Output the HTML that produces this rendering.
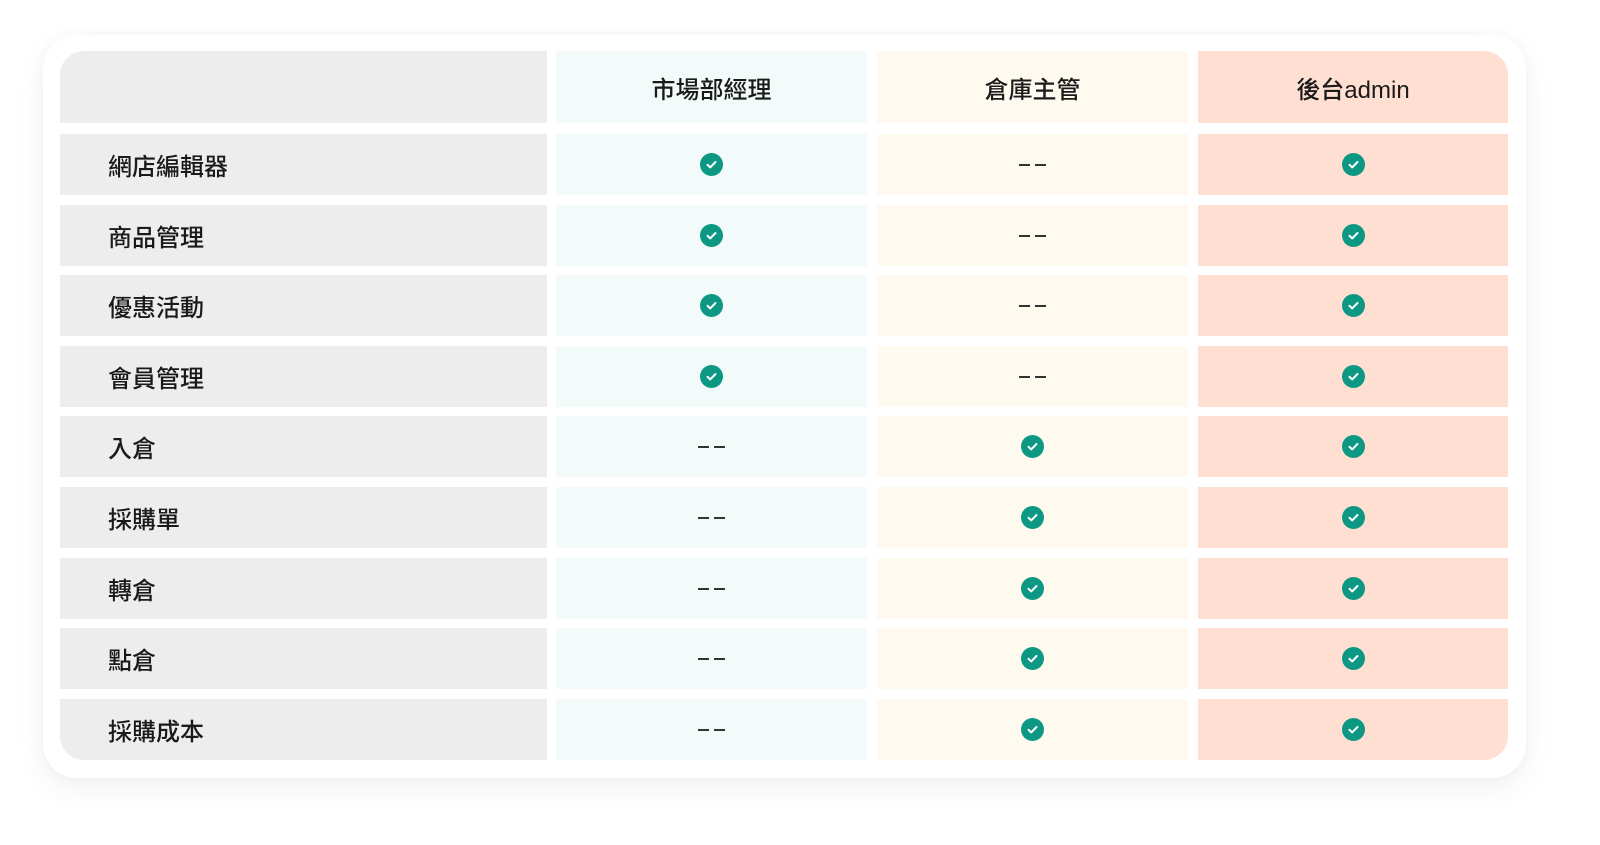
<!DOCTYPE html>
<html><head><meta charset="utf-8"><style>
html,body{margin:0;padding:0;background:#fff;width:1600px;height:845px;overflow:hidden;font-family:"Liberation Sans","Noto Sans CJK TC",sans-serif;}
.card{position:absolute;left:43px;top:35px;width:1483px;height:743px;background:#fff;border-radius:34px;box-shadow:0 10px 30px rgba(0,0,0,0.06),0 0 12px rgba(0,0,0,0.03);}
.c{position:absolute;display:flex;align-items:center;justify-content:center;font-size:24px;color:#1a1a1a;}
.hd{font-weight:500;}
.l{justify-content:flex-start;padding-left:48px;box-sizing:border-box;font-weight:500;}
.k1{background:#ededed}.k2{background:#f3fbfa}.k3{background:#fffaf0}.k4{background:#fedfd1}
.ck{width:23px;height:23px;border-radius:50%;background:#0d9883;display:flex;align-items:center;justify-content:center}
.dash{display:flex;gap:5px}.dash i{display:block;width:11px;height:2px;background:#333}
</style></head><body>
<div class="card"></div>
<div id="t"></div>
<script>
(function(){
var cols=[[60,487],[556,311],[877,311],[1198,310]];
var rows=["網店編輯器","商品管理","優惠活動","會員管理","入倉","採購單","轉倉","點倉","採購成本"];
var heads=["","市場部經理","倉庫主管","後台admin"];
var h='';
var ck='<div class="ck"><svg width="13" height="13" viewBox="0 0 13 13"><path d="M2.5 6.8l2.7 2.6 5.3-5.4" fill="none" stroke="#fff" stroke-width="2" stroke-linecap="round" stroke-linejoin="round"/></svg></div>';
var ds='<div class="dash"><i></i><i></i></div>';
for(var c=0;c<4;c++){
 var r='';
 if(c==0) r='border-top-left-radius:24px;';
 if(c==3) r='border-top-right-radius:24px;';
 h+='<div class="c hd k'+(c+1)+'" style="left:'+cols[c][0]+'px;top:51px;width:'+cols[c][1]+'px;height:72px;'+r+'">'+heads[c]+'</div>';
}
for(var i=0;i<9;i++){
 var yy=Math.round(134+i*70.6);
 for(var c=0;c<4;c++){
  var r='';
  if(i==8&&c==0) r='border-bottom-left-radius:24px;';
  if(i==8&&c==3) r='border-bottom-right-radius:24px;';
  var content;
  if(c==0) content=rows[i];
  else if(c==3) content=ck;
  else if(c==1) content=i<4?ck:ds;
  else content=i<4?ds:ck;
  h+='<div class="c k'+(c+1)+(c==0?' l':'')+'" style="left:'+cols[c][0]+'px;top:'+yy+'px;width:'+cols[c][1]+'px;height:61px;'+r+'">'+content+'</div>';
 }
}
document.getElementById('t').innerHTML=h;
})();
</script>
</body></html>
